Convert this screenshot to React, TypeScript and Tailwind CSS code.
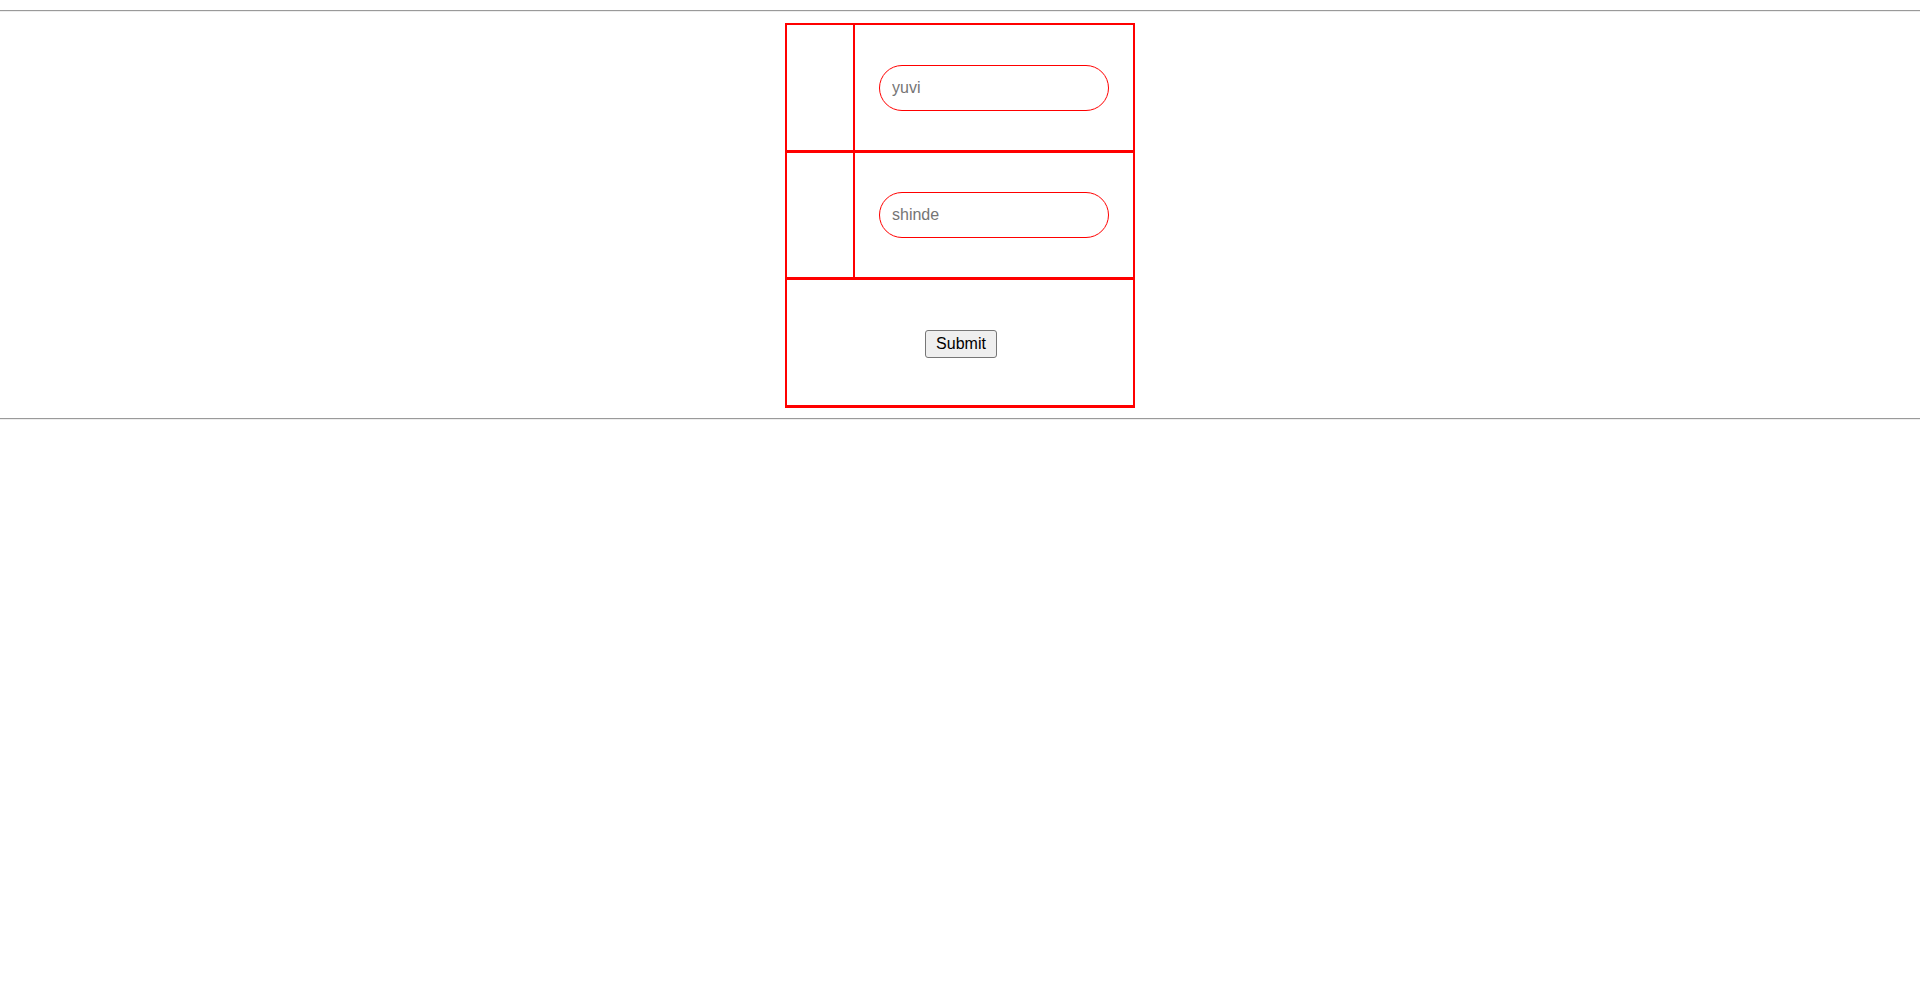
export default function App() {
  return (
    <div className="min-h-[1000px] bg-white" style={{ fontFamily: '"Liberation Sans", Arial, sans-serif' }}>
      <Rule className="mt-[10px]" />

      <div className="flex justify-center mt-[11px]">
        <div className="w-[350px] border-t-2 border-x-2 border-b-[3px] border-[#ff0000]">
          <FieldRow placeholder="yuvi" className="h-[128px] border-b-[3px]" />
          <FieldRow placeholder="shinde" className="h-[127px] border-b-[3px]" />
          <div className="h-[125px] flex items-center justify-center pt-[2px] pl-[2px]">
            <button
              type="submit"
              className="w-[72px] h-[28px] bg-[#efefef] border border-[#767676] rounded-[3px] text-[16px] text-black leading-none"
            >
              Submit
            </button>
          </div>
        </div>
      </div>

      <Rule className="mt-[10px]" />
    </div>
  );
}

function FieldRow({ placeholder, className }: { placeholder: string; className: string }) {
  return (
    <div className={`flex border-[#ff0000] ${className}`}>
      <div className="w-[68px] shrink-0 border-r-2 border-[#ff0000]" />
      <div className="flex-1 flex items-center pl-[24px]">
        <input
          type="text"
          placeholder={placeholder}
          className="w-[230px] h-[46px] border border-[#ff0000] rounded-full px-[12px] text-[16px] text-black placeholder:text-[#757575] outline-none bg-white"
        />
      </div>
    </div>
  );
}

function Rule({ className }: { className: string }) {
  return <div className={`h-[2px] border-t border-t-[#9a9a9a] border-b border-b-[#eeeeee] ${className}`} />;
}
